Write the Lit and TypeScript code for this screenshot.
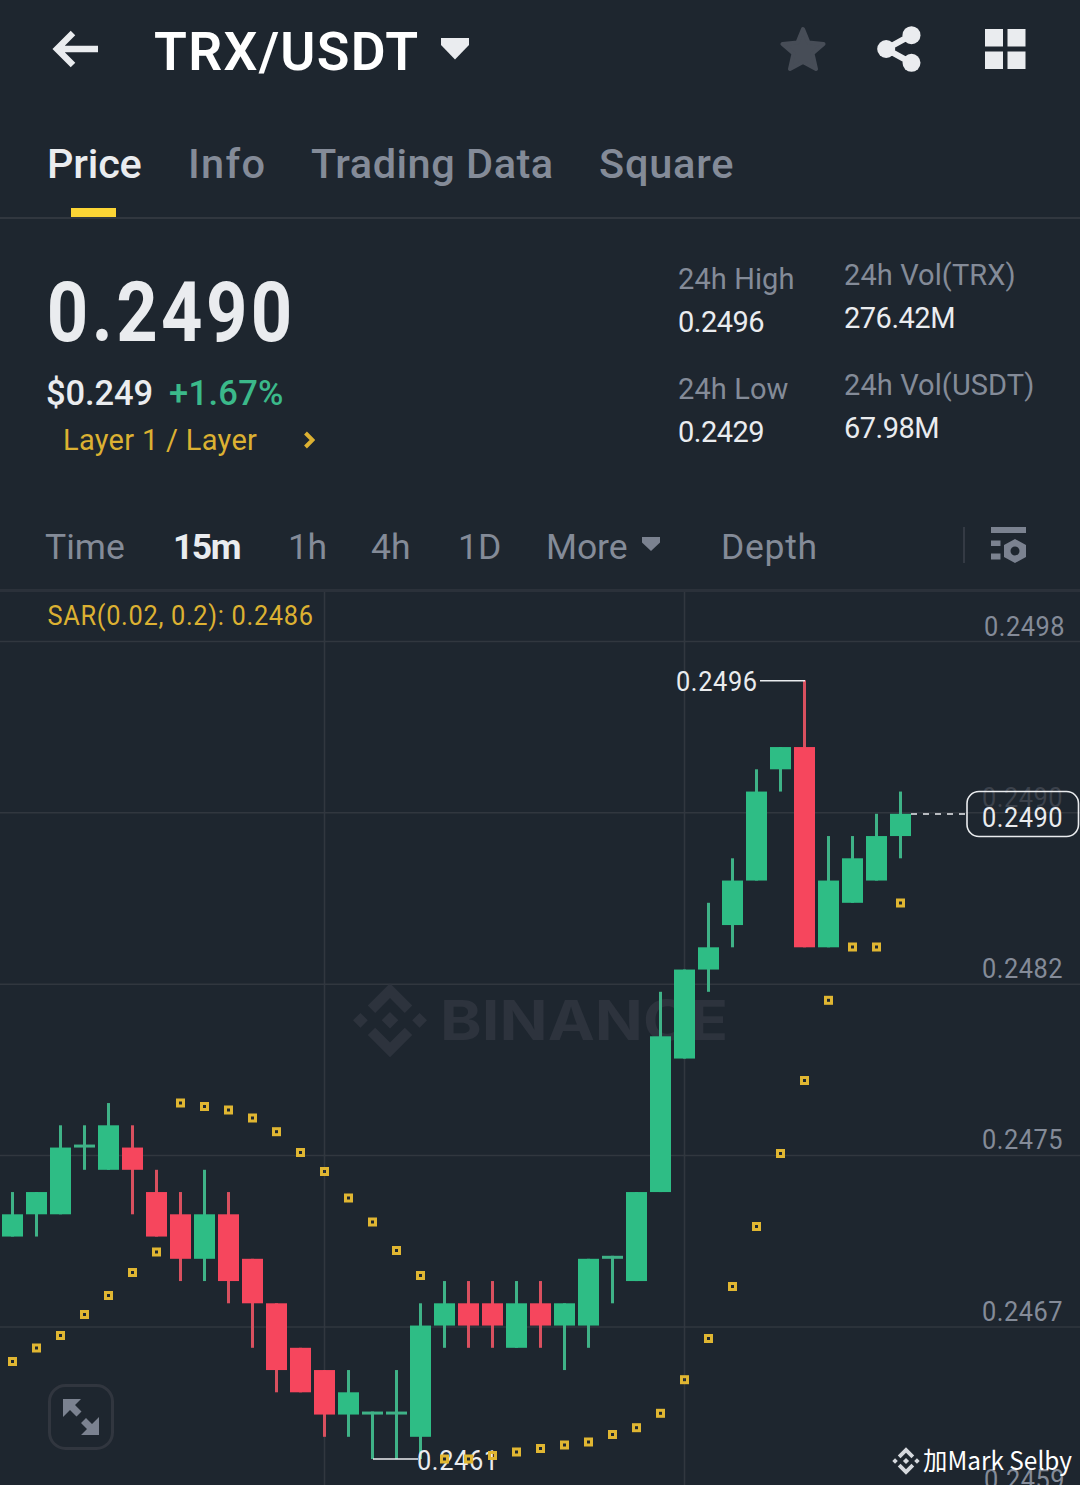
import { LitElement, html, svg, css } from "lit";
import { customElement } from "lit/decorators.js";

type Candle = [up: number, high: number, top: number, bottom: number, low: number];

// Candle values are price ticks counted down from the session high.
const CANDLES: Candle[] = [
  [1, 23, 24, 25, 25], [1, 23, 23, 24, 25], [1, 20, 21, 24, 24], [1, 20, 21, 21, 22],
  [1, 19, 20, 22, 22], [0, 20, 21, 22, 24], [0, 22, 23, 25, 25], [0, 23, 24, 26, 27],
  [1, 22, 24, 26, 27], [0, 23, 24, 27, 28], [0, 26, 26, 28, 30], [0, 28, 28, 31, 32],
  [0, 30, 30, 32, 32], [0, 31, 31, 33, 34], [1, 31, 32, 33, 34], [1, 33, 33, 33, 35],
  [1, 31, 33, 33, 35], [1, 28, 29, 34, 35], [1, 27, 28, 29, 30], [0, 27, 28, 29, 30],
  [0, 27, 28, 29, 30], [1, 27, 28, 30, 30], [0, 27, 28, 29, 30], [1, 28, 28, 29, 31],
  [1, 26, 26, 29, 30], [1, 26, 26, 26, 28], [1, 23, 23, 27, 27], [1, 14, 16, 23, 23],
  [1, 13, 13, 17, 17], [1, 10, 12, 13, 14], [1, 8, 9, 11, 12], [1, 4, 5, 9, 9],
  [1, 3, 3, 4, 5], [0, 0, 3, 12, 12], [1, 7, 9, 12, 12], [1, 7, 8, 10, 10],
  [1, 6, 7, 9, 9], [1, 5, 6, 7, 8],
];

const SAR = [
  1361.5, 1348, 1335.5, 1314.5, 1295.5, 1272.5, 1252, 1103, 1106.5, 1110, 1118, 1131.7, 1152.5,
  1171.5, 1198, 1222, 1250.5, 1275.5, 1459, 1459, 1455.5, 1452, 1448.5, 1445, 1442, 1434.5,
  1427.7, 1413.3, 1379.7, 1338.5, 1286.5, 1226.5, 1153.5, 1080.5, 1000.3, 947, 947, 903,
];

const yOf = (tick: number) => 680.3 + 22.25 * tick;
const xOf = (i: number) => 12.5 + 24 * i;

const LOGO =
  "M-22.2-14.8 0-37 22.2-14.8 14.8-7.4 0-22.2-14.8-7.4ZM-37 0-29.6-7.4-22.2 0-29.6 7.4ZM22.2 0 29.6-7.4 37 0 29.6 7.4ZM-8.3 0 0-8.3 8.3 0 0 8.3ZM-22.2 14.8-14.8 7.4 0 22.2 14.8 7.4 22.2 14.8 0 37Z";

@customElement("price-chart")
export class PriceChart extends LitElement {
  static styles = css`
    :host { display: block; }
    svg { display: block; width: 1080px; height: 893px; }
    text { font-family: Roboto, "Liberation Sans", sans-serif; font-size: 27px; }
    .grid { fill: none; stroke: #31373f; stroke-width: 1.6; }
    .up { fill: #2ebd85; }
    .down { fill: #f6465d; }
    .wick-up { fill: #3fb287; }
    .wick-down { fill: #d9505f; }
    .sar { fill: none; stroke: #e0b632; stroke-width: 3; }
    .axis { fill: #848b98; }
    .ghost { fill: #3c424c; }
    .bright { fill: #eaecef; }
    .gold { fill: #dcb132; }
    .brand { fill: #2d333d; }
    .brand-name { font-family: Inter, sans-serif; font-weight: 700; font-size: 55px; }
    .lead { stroke: #eaecef; stroke-width: 1.6; fill: none; }
    .tag { fill: none; stroke: #eaecef; stroke-width: 1.6; }
    .button { fill: #1e262f; stroke: #31363f; stroke-width: 3; }
    .expand { fill: #7b8290; }
    .credit { fill: #ffffff; font-family: "Noto Sans CJK SC", sans-serif; font-size: 25px; }
    .credit-logo { fill: #d5d8dd; }
  `;

  // Labels are drawn in a slightly condensed face with open tracking.
  private label(x: number, baseline: number, width: number, text: string, cls: string) {
    const squeeze = 0.94;
    return svg`<text class=${cls} transform="translate(${x} ${baseline}) scale(${squeeze} 1)" textLength=${width / squeeze}>${text}</text>`;
  }

  private candle([up, high, top, bottom, low]: Candle, i: number) {
    const x = xOf(i);
    const flat = top === bottom;
    const y = flat ? yOf(top) - 3 : yOf(top);
    const wickTop = high === top ? y : yOf(high);
    return svg`
      <rect class=${up ? "wick-up" : "wick-down"} x=${x - 1.5} y=${wickTop} width="3" height=${yOf(low) - wickTop}></rect>
      <rect class=${flat ? "wick-up" : up ? "up" : "down"} x=${x - 10.5} y=${y} width="21" height=${flat ? 3 : yOf(bottom) - y}></rect>`;
  }

  render() {
    return html`<svg viewBox="0 592 1080 893">
      <path class="grid" d="M0 641.5H1080M0 812.8H1080M0 984.2H1080M0 1155.5H1080M0 1327H1080M324.5 592V1485M684.5 592V1485"></path>
      <path class="brand" d=${LOGO} transform="translate(390 1020.3)"></path>
      <text class="brand brand-name" x="440" y="1040" textLength="288" lengthAdjust="spacingAndGlyphs">BINANCE</text>
      ${this.label(47.5, 625, 265.5, "SAR(0.02, 0.2): 0.2486", "gold")}
      ${this.label(984, 636, 80.5, "0.2498", "axis")}
      ${this.label(982, 807, 80.5, "0.2490", "ghost")}
      ${this.label(982, 978, 80.5, "0.2482", "axis")}
      ${this.label(982, 1149, 80.5, "0.2475", "axis")}
      ${this.label(982, 1321, 80.5, "0.2467", "axis")}
      ${this.label(984, 1489, 80.5, "0.2459", "axis")}
      ${CANDLES.map((c, i) => this.candle(c, i))}
      <path class="lead" d="M760 680.8H805M373 1459H418"></path>
      <path class="lead" stroke-dasharray="6 6" d="M911 814H967"></path>
      ${this.label(676, 691, 81, "0.2496", "bright")}
      ${this.label(417, 1470, 81, "0.2461", "bright")}
      ${SAR.map((y, i) => svg`<rect class="sar" x=${xOf(i) - 3} y=${y - 3} width="6" height="6"></rect>`)}
      <rect class="tag" x="967" y="791.5" width="111.5" height="45" rx="12"></rect>
      ${this.label(982, 827, 80.5, "0.2490", "bright")}
      <rect class="button" x="49.5" y="1385.5" width="63" height="63" rx="16"></rect>
      <path class="expand" d="M63 1399H81L75 1405 81.500 1411.500 76.500 1416.500 70 1410 63 1417ZM99 1435H81L87 1429 81 1423 86 1418 92 1424 99 1417Z"></path>
      <path class="credit-logo" d=${LOGO} transform="translate(906 1461) scale(.37)"></path>
      <text class="credit" x="923" y="1470" textLength="149" lengthAdjust="spacingAndGlyphs">加Mark Selby</text>
    </svg>`;
  }
}

@customElement("app-root")
export class AppRoot extends LitElement {
  static styles = css`
    :host {
      display: block; width: 1080px; height: 1485px; overflow: hidden;
      background: #1e262f; color: #eaecef;
      font-family: Roboto, "Liberation Sans", sans-serif; white-space: nowrap;
    }
    svg { display: block; flex: none; }
    .header { display: flex; align-items: center; height: 98px; padding: 0 54px 0 52px; box-sizing: border-box; }
    .pair { color: #fff; font-size: 53.5px; font-weight: 600; line-height: 60px; padding-top: 5px; width: 287px; margin-left: 56px; letter-spacing: 1.3px; box-sizing: border-box; }
    .actions { display: flex; align-items: center; margin-left: auto; }
    .share { margin-left: 51px; }
    .apps { margin-left: 64px; }
    .tabs { display: grid; grid-template-columns: 141px 123px 288px 1fr; height: 121px; box-sizing: border-box; padding: 44px 0 0 47px; border-bottom: 2px solid #31373f; font-size: 41.5px; font-weight: 500; line-height: 44px; color: #848b98; letter-spacing: 0.5px; }
    .tab { display: flex; flex-direction: column; align-items: flex-start; }
    .tab.active { letter-spacing: -0.2px; }
    .info { letter-spacing: 1.3px; }
    .square { letter-spacing: 0.8px; }
    .active { color: #eaecef; }
    .marker { width: 45px; height: 9px; margin: 22px 0 0 24px; background: #fcd535; }
    .summary { display: grid; grid-template-columns: 632px 166px 1fr; height: 286px; padding-left: 46px; box-sizing: border-box; }
    .quote { padding-top: 54px; }
    .last { font-size: 84px; font-weight: 700; line-height: 80px; letter-spacing: 4px; transform: scaleX(0.86); transform-origin: 0 50%; padding-left: 1px; }
    .change { display: flex; gap: 16px; margin-top: 20px; line-height: 40px; font-size: 34.5px; font-weight: 500; letter-spacing: -0.1px; }
    .rise { color: #3bb98a; letter-spacing: 0.3px; }
    .sector { display: flex; align-items: center; margin: 12px 0 0 17px; line-height: 30px; font-size: 29px; color: #dcb132; letter-spacing: 0.3px; }
    .sector-name { width: 240.5px; }
    .stats { padding-top: 45px; font-size: 29px; line-height: 30px; }
    .volumes { padding-top: 41px; }
    .name { color: #848b98; margin-bottom: 13px; letter-spacing: 0.1px; }
    .value { margin-bottom: 37px; letter-spacing: -0.5px; }
    .intervals { display: flex; align-items: center; height: 87px; box-sizing: border-box; padding: 0 54px 0 45px; border-bottom: 3px solid #2b313a; font-size: 35.5px; line-height: 40px; color: #848b98; }
    .i-time { width: 128px; }
    .i-15m { width: 115px; font-weight: 700; letter-spacing: -1.5px; }
    .i-1h { width: 83px; letter-spacing: -0.5px; }
    .i-4h { width: 87px; }
    .i-1d { width: 88px; }
    .i-more { width: 96px; letter-spacing: -0.1px; }
    .i-depth { margin-left: 61px; letter-spacing: 0.7px; }
    .tools { display: flex; align-items: center; gap: 26px; margin: -5px 0 0 auto; }
    .divider { width: 2px; height: 36px; background: #343a44; }
  `;

  render() {
    return html`
      <header class="header">
        <svg width="46" height="38" viewBox="0 0 46 38"><path d="M21 3 5 19 21 35M5 19H46" fill="none" stroke="#eaecef" stroke-width="6.4"></path></svg>
        <div class="pair">TRX/USDT</div>
        <svg width="28" height="22" viewBox="0 0 28 22"><path d="M0 0H28V7L14 21.500 0 7Z" fill="#eaecef"></path></svg>
        <div class="actions">
          <svg width="46" height="46" viewBox="0 0 46 46"><path d="M23 3 28.500 16.500 43.500 18 32.500 27.500 36 43 23 36 10 43 13.500 27.500 2.500 18 17.500 16.500Z" fill="#474d57" stroke="#474d57" stroke-width="4" stroke-linejoin="round"></path></svg>
          <svg class="share" width="44" height="46" viewBox="0 0 44 46"><path d="M34.500 9 9 23 34.500 37" fill="none" stroke="#eaecef" stroke-width="6"></path><g fill="#eaecef"><circle cx="9.200" cy="23" r="9"></circle><circle cx="34.500" cy="9.200" r="9"></circle><circle cx="34.500" cy="36.800" r="9"></circle></g></svg>
          <svg class="apps" width="41" height="40" viewBox="0 0 41 40"><path d="M0 0H18V17.500H0ZM22.500 0H40.500V17.500H22.500ZM0 22.500H18V40H0ZM22.500 22.500H40.500V40H22.500Z" fill="#eaecef"></path></svg>
        </div>
      </header>
      <nav class="tabs">
        <div class="tab active">Price<span class="marker"></span></div>
        <div class="tab info">Info</div>
        <div class="tab">Trading Data</div>
        <div class="tab square">Square</div>
      </nav>
      <section class="summary">
        <div class="quote">
          <div class="last">0.2490</div>
          <div class="change"><span>$0.249</span><span class="rise">+1.67%</span></div>
          <div class="sector">
            <span class="sector-name">Layer 1 / Layer</span>
            <svg width="11" height="18" viewBox="0 0 11 18"><path d="M1.500 2 8.500 9 1.500 16" fill="none" stroke="#dcb132" stroke-width="4"></path></svg>
          </div>
        </div>
        <div class="stats">
          <div class="name">24h High</div><div class="value">0.2496</div>
          <div class="name">24h Low</div><div class="value">0.2429</div>
        </div>
        <div class="stats volumes">
          <div class="name">24h Vol(TRX)</div><div class="value">276.42M</div>
          <div class="name">24h Vol(USDT)</div><div class="value">67.98M</div>
        </div>
      </section>
      <nav class="intervals">
        <span class="i-time">Time</span>
        <span class="i-15m active">15m</span>
        <span class="i-1h">1h</span>
        <span class="i-4h">4h</span>
        <span class="i-1d">1D</span>
        <span class="i-more">More</span>
        <svg width="18" height="20" viewBox="0 0 18 20"><path d="M0 0H18V5.500L9 14 0 5.500Z" fill="#7b8290"></path></svg>
        <span class="i-depth">Depth</span>
        <div class="tools">
          <div class="divider"></div>
          <svg width="35" height="36" viewBox="0 0 35 36"><path fill="#7b8290" fill-rule="evenodd" d="M0 0H35V6H0ZM0 13.500H9.500V19H0ZM0 26.500H9.500V32.500H0ZM24 12 35 18V30L24 36 13 30V18ZM24 19.500A4.500 4.500 0 1 0 24 28.500 4.500 4.500 0 1 0 24 19.500Z"></path></svg>
        </div>
      </nav>
      <price-chart></price-chart>
    `;
  }
}
